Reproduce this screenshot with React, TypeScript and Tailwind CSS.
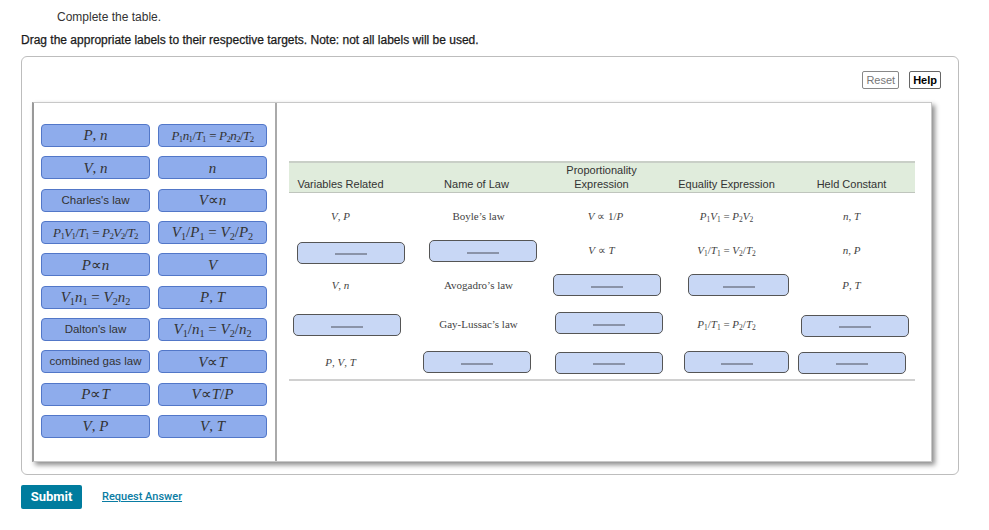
import React from "react";

function M({ s, cls = "" }: { s: string; cls?: string }) {
  const out: React.ReactNode[] = [];
  for (let i = 0; i < s.length; i++) {
    const c = s[i];
    if (c === "_") {
      out.push(
        <sub key={i} className="not-italic text-[0.68em] leading-none">
          {s[i + 1]}
        </sub>
      );
      i++;
    } else if (/[A-Za-z]/.test(c)) {
      out.push(
        <span key={i} className="italic">
          {c}
        </span>
      );
    } else if (c === "=") {
      out.push(
        <span key={i} className="not-italic mx-[0.25em]">
          =
        </span>
      );
    } else if (c === "∝") {
      out.push(
        <span key={i} className="not-italic">
          ∝
        </span>
      );
    } else if (c === ",") {
      out.push(
        <span key={i} className="not-italic mr-[0.25em]">
          ,
        </span>
      );
    } else if (c === " ") {
      out.push(<span key={i}>&nbsp;</span>);
    } else {
      out.push(
        <span key={i} className="not-italic">
          {c}
        </span>
      );
    }
  }
  return <span className={"whitespace-nowrap " + cls}>{out}</span>;
}

type ChipDef = { t: string; math?: boolean; small?: boolean };

const chips: ChipDef[][] = [
  [{ t: "P,n", math: true }, { t: "P_1n_1/T_1=P_2n_2/T_2", math: true, small: true }],
  [{ t: "V,n", math: true }, { t: "n", math: true }],
  [{ t: "Charles's law" }, { t: "V∝n", math: true }],
  [{ t: "P_1V_1/T_1=P_2V_2/T_2", math: true, small: true }, { t: "V_1/P_1=V_2/P_2", math: true }],
  [{ t: "P∝n", math: true }, { t: "V", math: true }],
  [{ t: "V_1n_1=V_2n_2", math: true }, { t: "P,T", math: true }],
  [{ t: "Dalton's law" }, { t: "V_1/n_1=V_2/n_2", math: true }],
  [{ t: "combined gas law" }, { t: "V∝T", math: true }],
  [{ t: "P∝T", math: true }, { t: "V∝T/P", math: true }],
  [{ t: "V,P", math: true }, { t: "V,T", math: true }],
];

function Chip({ c }: { c: ChipDef }) {
  return (
    <div className="w-[109px] h-[23px] rounded-[4px] bg-[#8eacec] border border-[#5277c8] flex items-center justify-center overflow-hidden text-[#333]">
      {c.math ? (
        <M
          s={c.t}
          cls={
            c.small
              ? "font-['Liberation_Serif',serif] text-[13px] tracking-[-0.6px]"
              : "font-['Liberation_Serif',serif] text-[15px]"
          }
        />
      ) : (
        <span className="font-['Liberation_Sans',Arial,sans-serif] text-[11.5px]">{c.t}</span>
      )}
    </div>
  );
}

function Target({ cls }: { cls: string }) {
  return (
    <div
      className={
        "w-[108px] h-[22px] rounded-[5px] bg-[#c8d7f5] border border-[#555] flex items-center justify-center " +
        cls
      }
    >
      <div className="w-[32px] h-[2px] bg-[#8a93a8] mt-[3px]" />
    </div>
  );
}

const cellText = "font-['Liberation_Serif',serif] text-[11px] text-[#444]";

function Cell({ children, cls = "" }: { children?: React.ReactNode; cls?: string }) {
  return <div className={"w-[125px] h-full flex items-center " + cls}>{children}</div>;
}

export default function App() {
  return (
    <div className="w-[989px] h-[530px] bg-white font-['Liberation_Sans',Arial,sans-serif] text-[#222]">
      <div className="pt-[10px] pl-[57px] text-[12px] leading-[14px] text-[#333]">Complete the table.</div>
      <div className="pt-[9px] pl-[21px] text-[12px] leading-[14px] text-[#1a1a1a] [-webkit-text-stroke:0.25px_#1a1a1a]">
        Drag the appropriate labels to their respective targets. Note: not all labels will be used.
      </div>

      <div className="ml-[21px] mt-[9px] w-[938px] h-[419px] border border-[#bdbdbd] rounded-[6px] pt-[14px] pl-[10px]">
        <div className="flex justify-end gap-[10px] pr-[17px] h-[18px]">
          <div className="h-[18px] px-[3px] border border-[#888] rounded-[2px] text-[11px] leading-[16px] text-[#777]">
            Reset
          </div>
          <div className="h-[18px] px-[3px] border border-[#666] rounded-[2px] text-[11px] leading-[16px] font-bold text-black">
            Help
          </div>
        </div>

        <div className="mt-[13px] w-[900px] h-[360px] flex border border-[#c8c8c8] border-l-2 border-l-[#999] shadow-[3px_3px_5px_rgba(0,0,0,0.45)] bg-white">
          {/* left label bank */}
          <div className="w-[243px] h-full border-r-2 border-r-[#aaa] pl-[7px] pt-[21px] flex flex-col gap-[9.35px]">
            {chips.map((row, i) => (
              <div key={i} className="flex gap-[8px]">
                <Chip c={row[0]} />
                <Chip c={row[1]} />
              </div>
            ))}
          </div>

          {/* right table */}
          <div className="flex-1 pl-[12px] pt-[58px]">
            <div className="w-[626px]">
              <div className="h-[32px] bg-[#e0ecdc] border-t-2 border-t-[#c9cfc7] border-b border-b-[#bfc5bd] flex items-end pb-[1px] text-[11px] leading-[14px] text-[#333]">
                <div className="w-[125px] text-center pr-[22px]">Variables Related</div>
                <div className="w-[125px] text-center">Name of Law</div>
                <div className="w-[125px] text-center">
                  Proportionality
                  <br />
                  Expression
                </div>
                <div className="w-[125px] text-center">Equality Expression</div>
                <div className="w-[125px] text-center">Held Constant</div>
              </div>

              <div className="h-[7px]" />

              {/* row 1 */}
              <div className="h-[33px] flex">
                <Cell cls="justify-center pr-[22px]">
                  <M s="V,P" cls={cellText} />
                </Cell>
                <Cell cls="justify-center pl-[4px]">
                  <span className={cellText}>Boyle’s law</span>
                </Cell>
                <Cell cls="justify-center pl-[8px]">
                  <M s="V ∝ 1/P" cls={cellText} />
                </Cell>
                <Cell cls="justify-center">
                  <M s="P_1V_1=P_2V_2" cls={cellText} />
                </Cell>
                <Cell cls="justify-center">
                  <M s="n,T" cls={cellText} />
                </Cell>
              </div>

              {/* row 2 */}
              <div className="h-[34px] flex">
                <Cell>
                  <Target cls="ml-[8px] mt-[5px]" />
                </Cell>
                <Cell>
                  <Target cls="ml-[15px] mt-[2px]" />
                </Cell>
                <Cell cls="justify-center">
                  <M s="V ∝ T" cls={cellText} />
                </Cell>
                <Cell cls="justify-center">
                  <M s="V_1/T_1=V_2/T_2" cls={cellText} />
                </Cell>
                <Cell cls="justify-center">
                  <M s="n,P" cls={cellText} />
                </Cell>
              </div>

              {/* row 3 */}
              <div className="h-[36px] flex">
                <Cell cls="justify-center pr-[22px]">
                  <M s="V,n" cls={cellText} />
                </Cell>
                <Cell cls="justify-center pl-[4px]">
                  <span className={cellText}>Avogadro’s law</span>
                </Cell>
                <Cell>
                  <Target cls="ml-[14px]" />
                </Cell>
                <Cell>
                  <Target cls="ml-[24px]" />
                </Cell>
                <Cell cls="justify-center">
                  <M s="P,T" cls={cellText} />
                </Cell>
              </div>

              {/* row 4 */}
              <div className="h-[42px] flex">
                <Cell>
                  <Target cls="ml-[4px] mt-[2px]" />
                </Cell>
                <Cell cls="justify-center pl-[4px]">
                  <span className={cellText}>Gay-Lussac’s law</span>
                </Cell>
                <Cell>
                  <Target cls="ml-[16px] mt-[-2px]" />
                </Cell>
                <Cell cls="justify-center">
                  <M s="P_1/T_1=P_2/T_2" cls={cellText} />
                </Cell>
                <Cell>
                  <Target cls="ml-[12px] mt-[3px]" />
                </Cell>
              </div>

              {/* row 5 */}
              <div className="h-[34px] flex">
                <Cell cls="justify-center pr-[22px]">
                  <M s="P,V,T" cls={cellText} />
                </Cell>
                <Cell>
                  <Target cls="ml-[9px]" />
                </Cell>
                <Cell>
                  <Target cls="ml-[16px] mt-[1px]" />
                </Cell>
                <Cell>
                  <Target cls="ml-[20px]" />
                </Cell>
                <Cell>
                  <Target cls="ml-[9px] mt-[1px]" />
                </Cell>
              </div>
              <div className="h-[2px] bg-[#d0d0d0]" />
            </div>
          </div>
        </div>
      </div>

      <div className="mt-[10px] ml-[21px] flex items-center gap-[20px]">
        <div className="w-[61px] h-[24px] rounded-[2px] bg-[#007c9e] text-white font-['Roboto',sans-serif] font-bold text-[13px] flex items-center justify-center">
          Submit
        </div>
        <div className="font-['Roboto',sans-serif] font-medium text-[11px] text-[#0a7ca3] underline">Request Answer</div>
      </div>
    </div>
  );
}
